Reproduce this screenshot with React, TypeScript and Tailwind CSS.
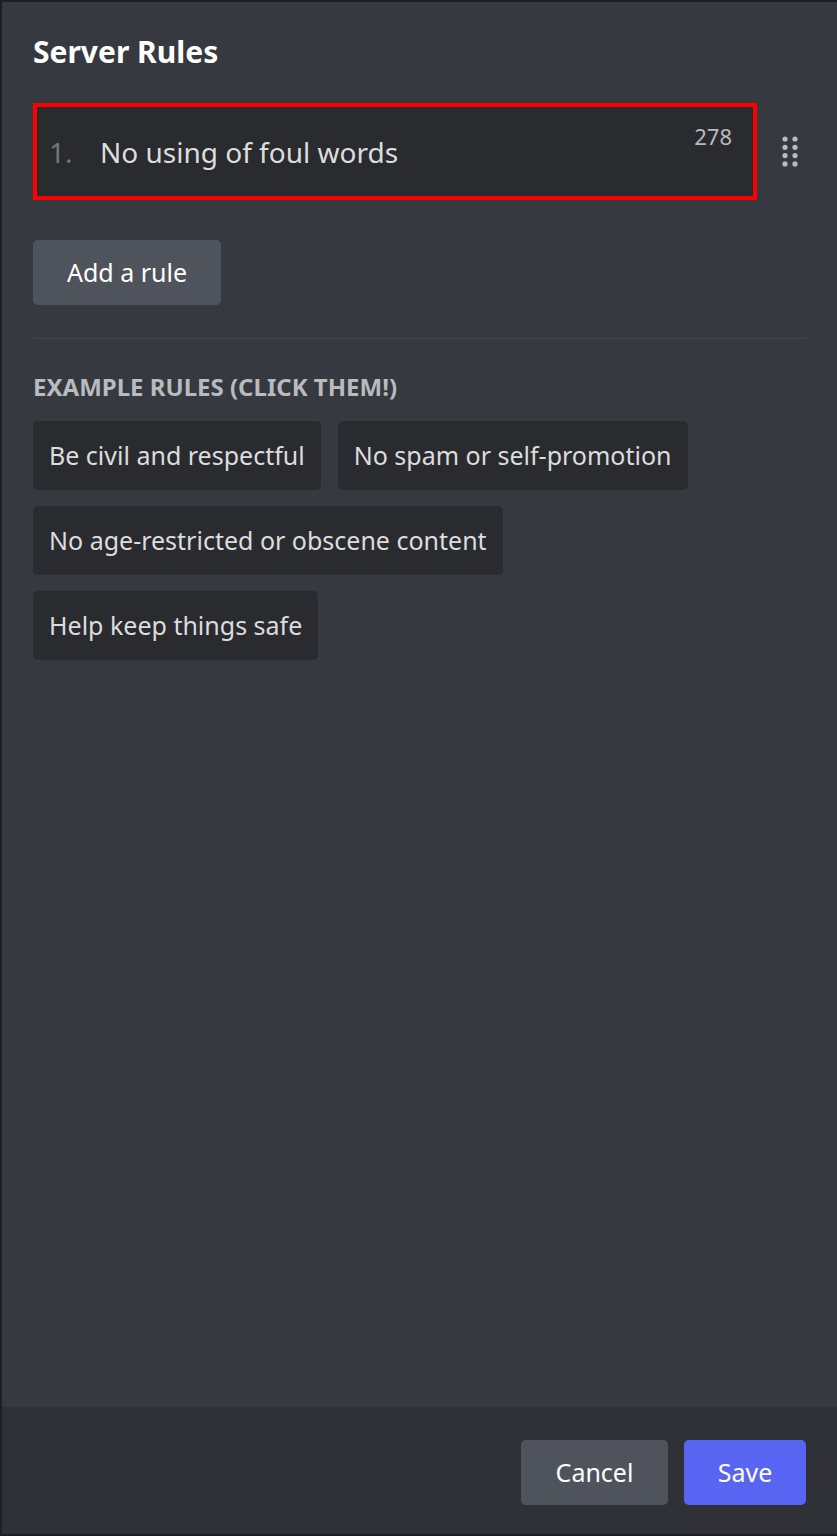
const EXAMPLES = [
  "Be civil and respectful",
  "No spam or self-promotion",
  "No age-restricted or obscene content",
  "Help keep things safe",
];

function DragHandle() {
  return (
    <svg width="16" height="31" viewBox="0 0 16 31" className="shrink-0">
      {[0, 1, 2, 3].map((r) =>
        [0, 1].map((c) => (
          <circle key={`${r}-${c}`} cx={3 + c * 10} cy={3 + r * 8.3} r="2.6" fill="#b9bbbe" />
        ))
      )}
    </svg>
  );
}

export default function App() {
  return (
    <div
      className="flex h-[1536px] w-[837px] flex-col overflow-hidden border-t-2 border-b-2 border-l-2 border-[#1e1f22] bg-[#36393f]"
      style={{ fontFamily: '"Noto Sans", "Open Sans", sans-serif' }}
    >
      <main className="flex-1 pl-[31px] pr-[31px] pt-[30px]">
        <h1 className="text-[30px] font-bold leading-[40px] text-white">Server Rules</h1>

        <div className="mr-[8px] mt-[31px] flex items-center gap-[25px]">
          <div className="relative flex h-[97px] flex-1 items-center border-4 border-[#ff0000] bg-[#2a2b2f] pl-[12px]">
            <span className="w-[51px] text-[28px] text-[#72767d]">1.</span>
            <span className="text-[28px] text-[#dcddde]">No using of foul words</span>
            <span className="absolute right-[21px] top-[13px] text-[22px] text-[#b9bbbe]">278</span>
          </div>
          <DragHandle />
        </div>

        <button className="mt-[40px] flex h-[65px] w-[188px] items-center justify-center rounded-[5px] bg-[#4f545c] text-[25px] text-white">
          Add a rule
        </button>

        <div className="mt-[33px] h-px bg-[#42454c]" />

        <h2 className="mt-[32px] text-[24px] font-bold leading-[32px] text-[#b9bbbe]">
          EXAMPLE RULES (CLICK THEM!)
        </h2>

        <div className="mt-[18px] flex flex-wrap gap-x-[17px] gap-y-[16px] pr-[100px]">
          {EXAMPLES.map((rule) => (
            <button
              key={rule}
              className="flex h-[69px] items-center rounded-[5px] bg-[#2a2b2f] px-[16px] text-[25px] text-[#dcddde]"
            >
              {rule}
            </button>
          ))}
        </div>
      </main>

      <footer className="flex h-[127px] items-start justify-end gap-[16px] bg-[#2f3136] pr-[31px] pt-[33px]">
        <button className="flex h-[65px] w-[147px] items-center justify-center rounded-[5px] bg-[#4f545c] text-[25px] text-white">
          Cancel
        </button>
        <button className="flex h-[65px] w-[122px] items-center justify-center rounded-[5px] bg-[#5865f2] text-[25px] text-white">
          Save
        </button>
      </footer>
    </div>
  );
}
